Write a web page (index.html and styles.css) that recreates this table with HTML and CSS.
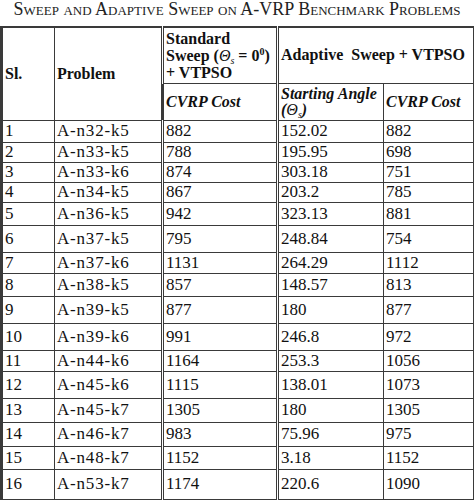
FILE: index.html
```html
<!DOCTYPE html>
<html>
<head>
<meta charset="utf-8">
<link rel="stylesheet" href="styles.css">
</head>
<body>
<div class="title">Sweep and Adaptive Sweep on A-VRP Benchmark Problems</div>
<table class="bench">
<colgroup><col class="c-sl"><col class="c-prob"><col class="c-std"><col class="c-ang"><col class="c-cost"></colgroup>
<thead>
<tr class="h1">
<th rowspan="2" class="sl">Sl.</th>
<th rowspan="2" class="prob">Problem</th>
<th class="std top">Standard<br>Sweep (<i class="th">Θ<sub>s</sub></i> = 0<sup>0</sup>)<br>+ VTPSO</th>
<th colspan="2" class="adp">Adaptive&nbsp; Sweep + VTPSO</th>
</tr>
<tr class="h2">
<th class="std em">CVRP Cost</th>
<th class="em ang">Starting Angle<br>(<span class="th">Θ<sub>s</sub></span>)</th>
<th class="em">CVRP Cost</th>
</tr>
</thead>
<tbody>
<tr class="r22"><td>1</td><td class="pb">A-n32-k5</td><td class="std">882</td><td>152.02</td><td>882</td></tr>
<tr class="r20"><td>2</td><td class="pb">A-n33-k5</td><td class="std">788</td><td>195.95</td><td>698</td></tr>
<tr class="r20"><td>3</td><td class="pb">A-n33-k6</td><td class="std">874</td><td>303.18</td><td>751</td></tr>
<tr class="r20"><td>4</td><td class="pb">A-n34-k5</td><td class="std">867</td><td>203.2</td><td>785</td></tr>
<tr class="r23"><td>5</td><td class="pb">A-n36-k5</td><td class="std">942</td><td>323.13</td><td>881</td></tr>
<tr class="r27"><td>6</td><td class="pb">A-n37-k5</td><td class="std">795</td><td>248.84</td><td>754</td></tr>
<tr class="r21"><td>7</td><td class="pb">A-n37-k6</td><td class="std">1131</td><td>264.29</td><td>1112</td></tr>
<tr class="r23"><td>8</td><td class="pb">A-n38-k5</td><td class="std">857</td><td>148.57</td><td>813</td></tr>
<tr class="r27"><td>9</td><td class="pb">A-n39-k5</td><td class="std">877</td><td>180</td><td>877</td></tr>
<tr class="r27"><td>10</td><td class="pb">A-n39-k6</td><td class="std">991</td><td>246.8</td><td>972</td></tr>
<tr class="r21"><td>11</td><td class="pb">A-n44-k6</td><td class="std">1164</td><td>253.3</td><td>1056</td></tr>
<tr class="r27"><td>12</td><td class="pb">A-n45-k6</td><td class="std">1115</td><td>138.01</td><td>1073</td></tr>
<tr class="r24"><td>13</td><td class="pb">A-n45-k7</td><td class="std">1305</td><td>180</td><td>1305</td></tr>
<tr class="r24"><td>14</td><td class="pb">A-n46-k7</td><td class="std">983</td><td>75.96</td><td>975</td></tr>
<tr class="r23"><td>15</td><td class="pb">A-n48-k7</td><td class="std">1152</td><td>3.18</td><td>1152</td></tr>
<tr class="r30"><td>16</td><td class="pb">A-n53-k7</td><td class="std">1174</td><td>220.6</td><td>1090</td></tr>
</tbody>
</table>
</body>
</html>
```

FILE: styles.css
```css
html, body {
  margin: 0;
  padding: 0;
  background: #fff;
}
body {
  font-family: "Liberation Serif", "Times New Roman", serif;
  color: #111;
  width: 474px;
  height: 501px;
  overflow: hidden;
}
.title {
  height: 25px;
  text-align: center;
  font-variant: small-caps;
  font-size: 18px;
  line-height: 18px;
  color: #222;
}
.bench {
  border-collapse: collapse;
  table-layout: fixed;
  width: 472px;
  margin-top: 1px;
  font-size: 17px;
}
.c-sl { width: 53px; }
.c-prob { width: 108px; }
.c-std { width: 115px; }
.c-ang { width: 106px; }
.c-cost { width: 90px; }
.bench th, .bench td {
  border: 1.5px solid #3a3a3a;
  padding: 0 2px;
  text-align: left;
  line-height: 16px;
}
.bench th {
  font-size: 16px;
  font-weight: bold;
  vertical-align: middle;
}
.bench td {
  vertical-align: middle;
}
.bench td.pb {
  letter-spacing: 0.8px;
}
.bench tr > :first-child {
  border-left: 3px solid #3a3a3a;
}
.bench .std {
  border-left: 3px double #3a3a3a;
  border-right: 3px double #3a3a3a;
}
.bench thead tr.h1 th {
  border-top: 2px solid #3a3a3a;
}
.h1 { height: 56px; }
.h2 { height: 37px; }
.bench th.top {
  vertical-align: top;
  padding-top: 2px;
  line-height: 17px;
}
.em { font-style: italic; }
.th { font-style: italic; font-weight: normal; }
sub { font-size: 10px; vertical-align: -3px; line-height: 0; }
sup { font-size: 10px; vertical-align: 6px; line-height: 0; }
.r20 { height: 20px; }
.r21 { height: 21px; }
.r22 { height: 22px; }
.r23 { height: 23px; }
.r24 { height: 24px; }
.r27 { height: 27px; }
.r30 { height: 30px; }
```
